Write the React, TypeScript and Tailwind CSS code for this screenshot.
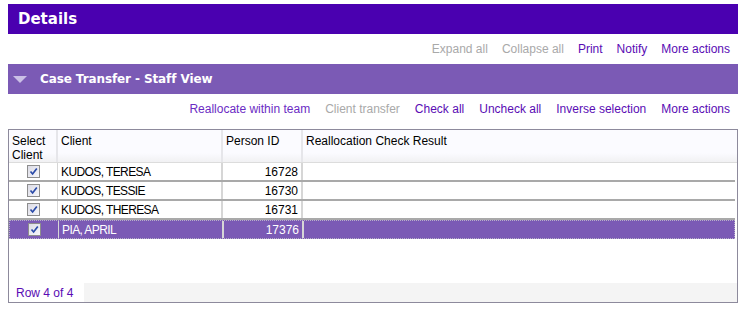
import { type ReactNode } from "react";

const rows = [
  { name: "KUDOS, TERESA", id: "16728" },
  { name: "KUDOS, TESSIE", id: "16730" },
  { name: "KUDOS, THERESA", id: "16731" },
  { name: "PIA, APRIL", id: "17376", selected: true },
];

function Link({ children, muted, tone }: { children: ReactNode; muted?: boolean; tone?: string }) {
  return (
    <a
      className={
        muted
          ? "cursor-default text-[#a9a9a9]"
          : tone === "light"
            ? "cursor-pointer text-[#6b2cc4]"
            : "cursor-pointer text-[#5a0cb4]"
      }
    >
      {children}
    </a>
  );
}

function CheckBox() {
  return (
    <span className="grid h-[13px] w-[13px] place-items-center border border-[#8d8d8d] bg-[linear-gradient(135deg,#dcdce6,#f6f6fa)]">
      <svg aria-hidden="true" className="h-[9px] w-[9px]" viewBox="0 0 9 9">
        <path d="M1.5 4.5 L3.6 7 L7.8 1.5" fill="none" stroke="#2a4aa8" strokeWidth="1.7" />
      </svg>
    </span>
  );
}

export default function App() {
  return (
    <div className="h-[311px] w-[748px] bg-white pl-2 pr-[10px] pt-1 font-['Liberation_Sans',Arial,sans-serif] text-[12px] text-black">
      <div className="flex h-[30px] items-center bg-[#4a00b0] pl-[10px] font-['DejaVu_Sans',sans-serif] text-[15px] font-bold text-white">
        Details
      </div>

      <div className="flex h-[30px] items-center justify-end gap-[14px] pr-2">
        <Link muted>Expand all</Link>
        <Link muted>Collapse all</Link>
        <Link>Print</Link>
        <Link>Notify</Link>
        <Link>More actions</Link>
      </div>

      <div className="flex h-[30px] items-center bg-[#7b5ab5] pl-[5px]">
        <svg aria-hidden="true" className="h-[7px] w-[14px]" viewBox="0 0 14 7">
          <path d="M0 0 H14 L7 7 Z" fill="#cbbfe6" />
        </svg>
        <span className="ml-[13px] font-['DejaVu_Sans',sans-serif] text-[12px] font-bold tracking-[-0.1px] text-white">
          Case Transfer - Staff View
        </span>
      </div>

      <div className="mb-[5px] flex h-[30px] items-center justify-end gap-[15px] pr-2">
        <Link tone="light">Reallocate within team</Link>
        <Link muted>Client transfer</Link>
        <Link>Check all</Link>
        <Link>Uncheck all</Link>
        <Link>Inverse selection</Link>
        <Link>More actions</Link>
      </div>

      <div className="flex h-[174px] flex-col border border-[#8d8a9c] bg-white">
        <div className="flex h-[33px] border-b border-[#dcdcdc] bg-[linear-gradient(#fbfbff_72%,#f1f1f3)] pr-[2px] leading-[14px]">
          <div className="w-[49px] border-r-2 border-[#e6e6ea] pl-[3px] pt-[4px]">
            Select
            <br />
            Client
          </div>
          <div className="w-[165px] border-r-2 border-[#e6e6ea] pl-[3px] pt-[4px]">Client</div>
          <div className="w-[80px] border-r-2 border-[#e6e6ea] pl-[3px] pt-[4px]">Person ID</div>
          <div className="flex-1 pl-[3px] pt-[4px]">Reallocation Check Result</div>
        </div>

        {rows.map((r) => (
          <div
            className={
              r.selected
                ? "mr-[2px] flex h-[19px] items-center border border-dotted border-[#b8b0c8] bg-[#7b5ab5] text-white"
                : "mr-[2px] flex h-[19px] items-center border-b-2 border-[#a9a9a9] bg-white"
            }
            key={r.id}
          >
            <div className="flex h-full w-[49px] items-center justify-center border-r border-[#d6d6d6]">
              <CheckBox />
            </div>
            <div className="flex h-full w-[165px] items-center border-r-2 border-[#d6d6d6] pl-[3px] pt-px tracking-[-0.6px]">
              {r.name}
            </div>
            <div className="flex h-full w-[80px] items-center justify-end border-r-2 border-[#d6d6d6] pr-[3px] pt-px">
              {r.id}
            </div>
            <div className="h-full flex-1" />
          </div>
        ))}

        <div className="flex-1" />

        <div className="flex h-[19px] items-center">
          <div className="flex h-full w-[75px] items-center pl-[7px] text-[#5a0cb4]">Row 4 of 4</div>
          <div className="h-full flex-1 bg-[#f4f4f4]" />
        </div>
      </div>
    </div>
  );
}
